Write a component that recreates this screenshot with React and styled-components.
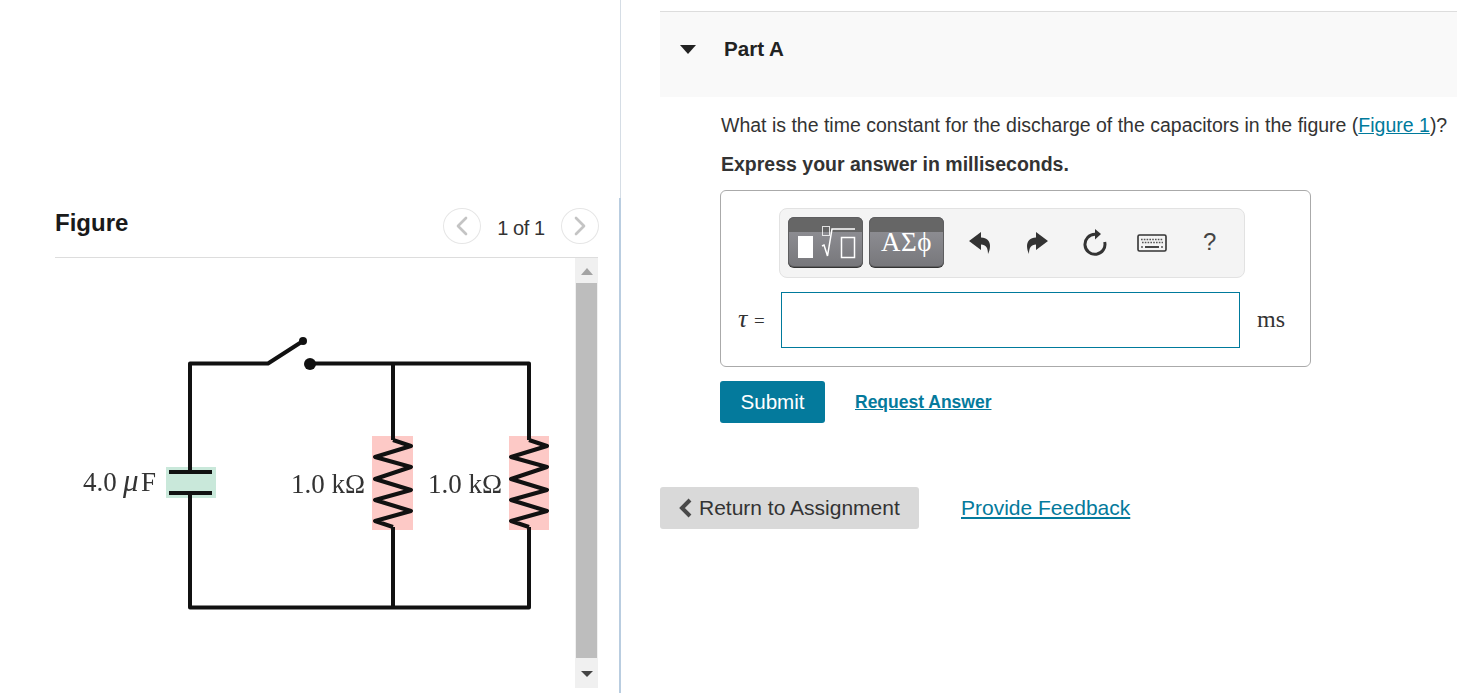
import React from 'react'
import styled, { createGlobalStyle } from 'styled-components'
import { LuChevronLeft, LuChevronRight } from 'react-icons/lu'

const Global = createGlobalStyle`
  html, body {
    margin: 0;
    padding: 0;
    height: 100%;
    overflow: hidden;
    background: #fff;
    font-family: "Liberation Sans", Arial, sans-serif;
  }
`

const Circuit = () => (
  <svg width="520" height="430" viewBox="55 258 520 430" style={{ filter: 'blur(0.45px)' }}>
    <rect x="166" y="467" width="50" height="31" fill="#c9e8da" />
    <rect x="372" y="436" width="41" height="94" fill="#fdc9c6" />
    <rect x="509" y="436" width="40" height="94" fill="#fdc9c6" />
    <g fill="none" stroke="#111" strokeWidth="4" strokeLinejoin="round">
      <path d="M190 472V363.5H268L303 341" />
      <path d="M310 363.5H529V440" />
      <path d="M190 493V607.5H529V527" />
      <path d="M393 364V440M393 527V607" />
      <path d="M169 472H212M169 493H212" />
      <path d="M393 440L411 446L375 457L411 467L375 479L411 490L375 500L411 511L375 521L393 527" />
      <path d="M529 440L547 446L511 457L547 467L511 479L547 490L511 500L547 511L511 521L529 527" />
    </g>
    <circle cx="303" cy="341" r="4" fill="#111" />
    <circle cx="310" cy="364" r="6" fill="#111" />
    <g fontFamily='"Liberation Serif", serif' fontSize="27" fill="#333">
      <text x="83" y="491">4.0<tspan x="123" fontStyle="italic" fontSize="31">μ</tspan><tspan x="141">F</tspan></text>
      <text x="291" y="493">1.0 kΩ</text>
      <text x="428" y="493">1.0 kΩ</text>
    </g>
  </svg>
)

const TemplateIcon = () => (
  <svg width="64" height="36" viewBox="795 225 64 36" fill="none" stroke="#fff">
    <rect x="799" y="236" width="15" height="22" fill="#fff" stroke="none" />
    <rect x="823.5" y="226.5" width="7" height="9" strokeOpacity="0.8" />
    <path d="M823 246l2 -1l3.5 11l4.5 -27h23" strokeWidth="1.5" />
    <rect x="842.5" y="237.5" width="13" height="20" strokeWidth="1.5" />
  </svg>
)

const UndoIcon = ({ flip }) => (
  <svg width="21" height="22" viewBox="0 0 21 22" style={flip ? { transform: 'scaleX(-1)' } : undefined}>
    <path
      d="M0 9L12 0V5.5C18 5.5 21 9.5 21 14C21 17 20 20 19 22C19 16 17 12.5 12 12.5V18Z"
      fill="#333"
    />
  </svg>
)

const RefreshIcon = () => (
  <svg width="26" height="28" viewBox="1083 229 26 28" fill="none">
    <path d="M1096 234.3A10 10 0 1 0 1105.7 242" stroke="#333" strokeWidth="3" />
    <path d="M1096 229L1102 234L1096 239.5Z" fill="#333" />
  </svg>
)

const KeyboardIcon = () => (
  <svg width="30" height="18" viewBox="0 0 30 18">
    <rect x="1" y="1" width="28" height="16" rx="1.5" fill="#f4f4f4" stroke="#333" strokeWidth="1.6" />
    <path d="M4 5.5H26M5 8.5H26" stroke="#555" strokeWidth="1.6" strokeDasharray="1.6 1.2" />
    <path d="M8 13H22" stroke="#333" strokeWidth="1.8" />
    <path d="M4 13H6M24 13H26" stroke="#555" strokeWidth="1.6" />
  </svg>
)

const BackChevron = () => (
  <svg width="13" height="20" viewBox="0 0 13 20" fill="none">
    <path d="M11 2L3 10L11 18" stroke="#4a4a4a" strokeWidth="4" />
  </svg>
)

export default function App() {
  return (
    <Page>
      <Global />
      <LeftColumn>
        <TopStripe />
        <FigurePanel>
          <FigureHeader>
            <FigureTitle>Figure</FigureTitle>
            <Pager>
              <RoundButton><LuChevronLeft size={32} strokeWidth={2} /></RoundButton>
              <PagerText>1 of 1</PagerText>
              <RoundButton><LuChevronRight size={32} strokeWidth={2} /></RoundButton>
            </Pager>
          </FigureHeader>
          <FigureBody>
            <Circuit />
            <Scrollbar>
              <ArrowUp />
              <Thumb />
              <ArrowDown />
            </Scrollbar>
          </FigureBody>
        </FigurePanel>
      </LeftColumn>

      <RightColumn>
        <PartHeader>
          <Caret />
          <PartTitle>Part A</PartTitle>
        </PartHeader>
        <PartBody>
          <Question>
            What is the time constant for the discharge of the capacitors in the figure (<TextLink>Figure 1</TextLink>)?
          </Question>
          <Instruction>Express your answer in milliseconds.</Instruction>
          <AnswerBox>
            <Toolbar>
              <MathButton><TemplateIcon /></MathButton>
              <MathButton><Greek>ΑΣϕ</Greek></MathButton>
              <ToolIcons>
                <ToolIcon $left={190}><UndoIcon /></ToolIcon>
                <ToolIcon $left={248}><UndoIcon flip /></ToolIcon>
                <ToolIcon $left={303}><RefreshIcon /></ToolIcon>
                <ToolIcon $left={358}><KeyboardIcon /></ToolIcon>
                <HelpMark>?</HelpMark>
              </ToolIcons>
            </Toolbar>
            <AnswerRow>
              <Tau><i>τ</i> =</Tau>
              <AnswerInput />
              <Unit>ms</Unit>
            </AnswerRow>
          </AnswerBox>
          <Actions>
            <SubmitButton>Submit</SubmitButton>
            <RequestLink>Request Answer</RequestLink>
          </Actions>
        </PartBody>
        <Footer>
          <ReturnButton><BackChevron />Return to Assignment</ReturnButton>
          <FeedbackLink>Provide Feedback</FeedbackLink>
        </Footer>
      </RightColumn>
    </Page>
  )
}

const Page = styled.div`
  display: flex;
  width: 1457px;
  height: 693px;
  overflow: hidden;
`

const LeftColumn = styled.div`
  display: flex;
  flex-direction: column;
  width: 621px;
  flex-shrink: 0;
`

const TopStripe = styled.div`
  height: 198px;
  flex-shrink: 0;
  border-right: 1px solid #d5dde5;
`

const FigurePanel = styled.div`
  flex: 1;
  padding-left: 55px;
  padding-right: 21px;
  border-right: 2px solid #b9cde0;
`

const FigureHeader = styled.div`
  display: flex;
  justify-content: space-between;
  height: 59px;
  border-bottom: 1px solid #ddd;
`

const FigureTitle = styled.div`
  margin-top: 12px;
  font-size: 24px;
  line-height: 26px;
  font-weight: bold;
  color: #1a1a1a;
`

const Pager = styled.div`
  display: flex;
  align-items: flex-start;
  padding-top: 10px;
  margin-right: -1px;
`

const RoundButton = styled.div`
  display: flex;
  align-items: center;
  justify-content: center;
  width: 38px;
  height: 36px;
  box-sizing: border-box;
  border: 1px solid #e6e6e6;
  border-radius: 50%;
  color: #c4c4c4;
`

const PagerText = styled.div`
  width: 80px;
  text-align: center;
  font-size: 20px;
  letter-spacing: -0.4px;
  line-height: 40px;
  color: #333;
`

const FigureBody = styled.div`
  display: flex;
  height: 430px;
`

const Scrollbar = styled.div`
  display: flex;
  flex-direction: column;
  align-items: center;
  width: 23px;
  background: #f0f0f0;
`

const ArrowUp = styled.div`
  width: 0;
  height: 0;
  margin: 10px 0 8px;
  border-left: 6px solid transparent;
  border-right: 6px solid transparent;
  border-bottom: 7px solid #a3a3a3;
`

const Thumb = styled.div`
  width: 21px;
  height: 375px;
  background: #bdbdbd;
`

const ArrowDown = styled.div`
  width: 0;
  height: 0;
  margin-top: 13px;
  border-left: 6px solid transparent;
  border-right: 6px solid transparent;
  border-top: 6px solid #444;
`

const RightColumn = styled.div`
  width: 797px;
  margin-left: 39px;
  padding-top: 11px;
  flex-shrink: 0;
`

const PartHeader = styled.div`
  display: flex;
  align-items: center;
  height: 86px;
  padding-bottom: 11px;
  box-sizing: border-box;
  background: #f9f9f9;
  border-top: 1px solid #ddd;
`

const Caret = styled.div`
  width: 0;
  height: 0;
  margin-left: 20px;
  border-left: 8px solid transparent;
  border-right: 8px solid transparent;
  border-top: 9px solid #222;
`

const PartTitle = styled.div`
  margin-left: 28px;
  font-size: 20.6px;
  font-weight: bold;
  color: #222;
`

const PartBody = styled.div`
  padding-left: 61px;
`

const Question = styled.div`
  margin-top: 16px;
  font-size: 19.5px;
  line-height: 24px;
  color: #333;
  white-space: nowrap;
`

const TextLink = styled.span`
  color: #007a9c;
  text-decoration: underline;
`

const Instruction = styled.div`
  margin-top: 15px;
  font-size: 19.5px;
  line-height: 24px;
  font-weight: bold;
  color: #333;
`

const AnswerBox = styled.div`
  position: relative;
  width: 591px;
  height: 177px;
  margin: 14px 0 0 -1px;
  box-sizing: border-box;
  border: 1px solid #aaa;
  border-radius: 6px;
  padding: 17px 0 0 58px;
`

const Toolbar = styled.div`
  display: flex;
  gap: 6px;
  width: 466px;
  height: 70px;
  box-sizing: border-box;
  padding: 8px;
  background: #f4f4f4;
  border: 1px solid #e2e2e2;
  border-radius: 8px;
  position: relative;
`

const MathButton = styled.div`
  display: flex;
  align-items: flex-end;
  justify-content: center;
  width: 75px;
  height: 51px;
  box-sizing: border-box;
  padding-bottom: 6px;
  border-radius: 6px;
  border-bottom: 1px solid #333;
  background: linear-gradient(#666 0, #666 30%, #8c8c91 30%, #77777b 100%);
  box-shadow: inset 0 0 0 1px #5e5e60;
`

const Greek = styled.span`
  font-family: "Liberation Serif", serif;
  font-size: 27px;
  line-height: 34px;
  color: #fff;
  letter-spacing: 0.5px;
  position: relative;
  top: -2px;
`

const ToolIcons = styled.div`
  position: absolute;
  inset: 0;
`

const ToolIcon = styled.div`
  position: absolute;
  top: 50%;
  left: ${(p) => p.$left - 1}px;
  transform: translateY(-50%);
  display: flex;
`

const HelpMark = styled.div`
  position: absolute;
  left: 423px;
  top: 18px;
  font-size: 24px;
  line-height: 30px;
  color: #444;
`

const AnswerRow = styled.div`
  display: flex;
  align-items: center;
  margin: 14px 0 0 -41px;
`

const Tau = styled.div`
  width: 43px;
  margin-bottom: 2px;
  font-family: "Liberation Serif", serif;
  font-size: 19px;
  color: #333;
  white-space: nowrap;

  i {
    font-size: 26px;
    margin-right: 2px;
  }
`

const AnswerInput = styled.div`
  width: 459px;
  height: 56px;
  box-sizing: border-box;
  border: 1px solid #007a9c;
`

const Unit = styled.div`
  margin: 0 0 2px 17px;
  font-family: "Liberation Serif", serif;
  font-size: 24px;
  color: #333;
`

const Actions = styled.div`
  display: flex;
  align-items: center;
  margin: 14px 0 0 -1px;
`

const SubmitButton = styled.div`
  width: 105px;
  height: 42px;
  border-radius: 3px;
  background: #047a9c;
  color: #fff;
  font-size: 20.6px;
  line-height: 42px;
  text-align: center;
`

const RequestLink = styled.span`
  margin-left: 30px;
  color: #047a9c;
  font-size: 17.5px;
  font-weight: bold;
  text-decoration: underline;
`

const Footer = styled.div`
  display: flex;
  align-items: center;
  margin-top: 64px;
`

const ReturnButton = styled.div`
  display: flex;
  align-items: center;
  gap: 7px;
  width: 259px;
  height: 42px;
  box-sizing: border-box;
  padding-left: 19px;
  border-radius: 3px;
  background: #d9d9d9;
  color: #333;
  font-size: 21px;
`

const FeedbackLink = styled.span`
  margin-left: 42px;
  color: #047a9c;
  font-size: 21px;
  text-decoration: underline;
`
